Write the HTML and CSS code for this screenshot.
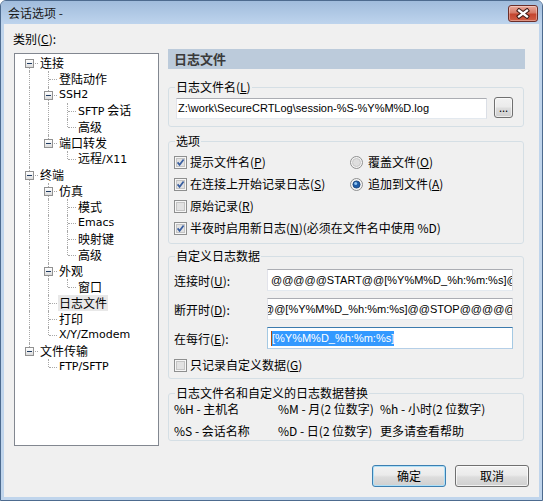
FILE: index.html
```html
<!DOCTYPE html>
<html lang="zh-CN">
<head>
<meta charset="utf-8">
<title>会话选项</title>
<link rel="stylesheet" href="styles.css">
</head>
<body>
<div class="window">
  <div class="titlebar">
    <span class="title">会话选项 -</span>
    <button class="close" aria-label="关闭">
      <svg width="14" height="11" viewBox="0 0 14 11"><path d="M3 2.5 L11 8.5 M11 2.5 L3 8.5" stroke="#3d1a16" stroke-width="4.2" stroke-linecap="square"/><path d="M3 2.5 L11 8.5 M11 2.5 L3 8.5" stroke="#ffffff" stroke-width="2.2" stroke-linecap="square"/></svg>
    </button>
  </div>
  <div class="client">
    <div class="main">
      <div class="left">
        <div class="cat-label">类别(<u>C</u>):</div>
        <div class="tree">
          <div class="row"><span class="c first"><i class="box"></i></span><span class="lbl">连接</span></div>
          <div class="row"><span class="c v"></span><span class="c tee"></span><span class="lbl">登陆动作</span></div>
          <div class="row"><span class="c v"></span><span class="c tee"><i class="box"></i></span><span class="lbl lat">SSH2</span></div>
          <div class="row"><span class="c v"></span><span class="c v"></span><span class="c tee"></span><span class="lbl"><span class="lat">SFTP</span> 会话</span></div>
          <div class="row"><span class="c v"></span><span class="c v"></span><span class="c ell"></span><span class="lbl">高级</span></div>
          <div class="row"><span class="c v"></span><span class="c ell"><i class="box"></i></span><span class="lbl">端口转发</span></div>
          <div class="row"><span class="c v"></span><span class="c"></span><span class="c ell"></span><span class="lbl">远程<span class="lat">/X11</span></span></div>
          <div class="row"><span class="c tee"><i class="box"></i></span><span class="lbl">终端</span></div>
          <div class="row"><span class="c v"></span><span class="c tee"><i class="box"></i></span><span class="lbl">仿真</span></div>
          <div class="row"><span class="c v"></span><span class="c v"></span><span class="c tee"></span><span class="lbl">模式</span></div>
          <div class="row"><span class="c v"></span><span class="c v"></span><span class="c tee"></span><span class="lbl lat">Emacs</span></div>
          <div class="row"><span class="c v"></span><span class="c v"></span><span class="c tee"></span><span class="lbl">映射键</span></div>
          <div class="row"><span class="c v"></span><span class="c v"></span><span class="c ell"></span><span class="lbl">高级</span></div>
          <div class="row"><span class="c v"></span><span class="c tee"><i class="box"></i></span><span class="lbl">外观</span></div>
          <div class="row"><span class="c v"></span><span class="c v"></span><span class="c ell"></span><span class="lbl">窗口</span></div>
          <div class="row"><span class="c v"></span><span class="c tee"></span><span class="lbl sel">日志文件</span></div>
          <div class="row"><span class="c v"></span><span class="c tee"></span><span class="lbl">打印</span></div>
          <div class="row"><span class="c v"></span><span class="c ell"></span><span class="lbl lat">X/Y/Zmodem</span></div>
          <div class="row"><span class="c ell"><i class="box"></i></span><span class="lbl">文件传输</span></div>
          <div class="row"><span class="c"></span><span class="c ell"></span><span class="lbl lat">FTP/SFTP</span></div>
        </div>
      </div>

      <div class="right">
        <div class="page-title">日志文件</div>

        <div class="group g-file">
          <div class="group-title">日志文件名(<u>L</u>)</div>
          <div class="file-row">
            <div class="textbox file">Z:\work\SecureCRTLog\session-%S-%Y%M%D.log</div>
            <button class="browse">...</button>
          </div>
        </div>

        <div class="group g-opt">
          <div class="group-title">选项</div>
          <div class="opt-grid">
            <div class="chk"><svg class="cb" width="13" height="13" viewBox="0 0 13 13"><rect x="0.5" y="0.5" width="12" height="12" fill="#f6f6f6" stroke="#8e8f8f"/><rect x="2.5" y="2.5" width="8" height="8" fill="#e2e2e2" stroke="#c4c4c4"/><path d="M3.6 6.4 L5.6 8.8 L9.6 3.4" fill="none" stroke="#3a5fa0" stroke-width="1.7"/></svg><span>提示文件名(<u>P</u>)</span></div>
            <div class="chk rd"><svg class="cb" width="13" height="13" viewBox="0 0 13 13"><circle cx="6.5" cy="6.5" r="6" fill="#f4f4f4" stroke="#8e8f8f"/><circle cx="6.5" cy="6.5" r="4" fill="#dedede" stroke="#c8c8c8"/></svg><span>覆盖文件(<u>O</u>)</span></div>
            <div class="chk"><svg class="cb" width="13" height="13" viewBox="0 0 13 13"><rect x="0.5" y="0.5" width="12" height="12" fill="#f6f6f6" stroke="#8e8f8f"/><rect x="2.5" y="2.5" width="8" height="8" fill="#e2e2e2" stroke="#c4c4c4"/><path d="M3.6 6.4 L5.6 8.8 L9.6 3.4" fill="none" stroke="#3a5fa0" stroke-width="1.7"/></svg><span>在连接上开始记录日志(<u>S</u>)</span></div>
            <div class="chk rd"><svg class="cb" width="13" height="13" viewBox="0 0 13 13"><circle cx="6.5" cy="6.5" r="6" fill="#f4f4f4" stroke="#8e8f8f"/><circle cx="6.5" cy="6.5" r="3.6" fill="#1d5ca8" stroke="#163f73" stroke-width="0.8"/><circle cx="5.7" cy="5.6" r="1.5" fill="#8fc3f0"/></svg><span>追加到文件(<u>A</u>)</span></div>
            <div class="chk span"><svg class="cb" width="13" height="13" viewBox="0 0 13 13"><rect x="0.5" y="0.5" width="12" height="12" fill="#f6f6f6" stroke="#8e8f8f"/><rect x="2.5" y="2.5" width="8" height="8" fill="#e2e2e2" stroke="#c4c4c4"/></svg><span>原始记录(<u>R</u>)</span></div>
            <div class="chk span"><svg class="cb" width="13" height="13" viewBox="0 0 13 13"><rect x="0.5" y="0.5" width="12" height="12" fill="#f6f6f6" stroke="#8e8f8f"/><rect x="2.5" y="2.5" width="8" height="8" fill="#e2e2e2" stroke="#c4c4c4"/><path d="M3.6 6.4 L5.6 8.8 L9.6 3.4" fill="none" stroke="#3a5fa0" stroke-width="1.7"/></svg><span>半夜时启用新日志(<u>N</u>)(必须在文件名中使用 %D)</span></div>
          </div>
        </div>

        <div class="group g-custom">
          <div class="group-title">自定义日志数据</div>
          <div class="cust-grid">
            <span>连接时(<u>U</u>):</span>
            <div class="textbox">@@@@@START@@[%Y%M%D_%h:%m:%s]@</div>
            <span>断开时(<u>D</u>):</span>
            <div class="textbox"><span class="shift">@@[%Y%M%D_%h:%m:%s]@@STOP@@@@@</span></div>
            <span>在每行(<u>E</u>):</span>
            <div class="textbox focus"><span class="caret"></span><span class="selected">[%Y%M%D_%h:%m:%s]</span></div>
          </div>
          <div class="chk only"><svg class="cb" width="13" height="13" viewBox="0 0 13 13"><rect x="0.5" y="0.5" width="12" height="12" fill="#f6f6f6" stroke="#8e8f8f"/><rect x="2.5" y="2.5" width="8" height="8" fill="#e2e2e2" stroke="#c4c4c4"/></svg><span>只记录自定义数据(<u>G</u>)</span></div>
        </div>

        <div class="group g-sub">
          <div class="group-title">日志文件名和自定义的日志数据替换</div>
          <div class="sub-grid">
            <span>%H - 主机名</span>
            <span>%M - 月(2 位数字)</span>
            <span>%h - 小时(2 位数字)</span>
            <span>%S - 会话名称</span>
            <span>%D - 日(2 位数字)</span>
            <span>更多请查看帮助</span>
          </div>
        </div>
      </div>
    </div>

    <div class="buttons">
      <button class="btn default">确定</button>
      <button class="btn">取消</button>
    </div>
  </div>
</div>
</body>
</html>
```

FILE: styles.css
```css
* { box-sizing: border-box; }

html, body {
  margin: 0;
  padding: 0;
  background: #ffffff;
}

body {
  font-family: "Noto Sans CJK SC", "Liberation Sans", sans-serif;
  font-size: 12px;
  color: #000;
}

u { text-decoration: underline; text-underline-offset: 1px; }

button { font-family: inherit; }

.window {
  width: 543px;
  height: 501px;
  border: 1px solid #4d6b8f;
  border-radius: 6px 6px 0 0;
  background: #c0d5ec;
  display: flex;
  flex-direction: column;
  overflow: hidden;
}

.titlebar {
  height: 23px;
  flex: none;
  display: flex;
  align-items: flex-start;
  justify-content: space-between;
  background: linear-gradient(#a0bcdc, #bed4ed);
  padding: 0 4px 0 7px;
}

.title {
  margin-top: 4px;
  line-height: 16px;
  font-size: 12px;
  color: #1a1a1a;
}

.close {
  margin-top: 4px;
  width: 30px;
  height: 17px;
  padding: 0;
  border: 1px solid #6b2e29;
  border-radius: 3px;
  background: linear-gradient(#e9a99b 0%, #d67a67 45%, #c4452f 55%, #d15e45 100%);
  box-shadow: inset 0 0 0 1px rgba(255, 255, 255, 0.35);
  display: flex;
  align-items: center;
  justify-content: center;
}

.close svg { display: block; }

.client {
  flex: 1;
  margin: 0 3px 3px;
  background: #f0f0f0;
  display: flex;
  flex-direction: column;
  padding: 0 10px;
}

.main {
  display: flex;
  height: 422px;
  flex: none;
}

.left {
  width: 145px;
  flex: none;
}

.cat-label {
  margin-top: 7px;
  margin-left: -1px;
  line-height: 16px;
}

.tree {
  margin-top: 6px;
  height: 393px;
  border: 1px solid #828790;
  background: #fff;
  padding: 1px 0 0 5px;
}

.row {
  display: flex;
  height: 16px;
  align-items: center;
}

.c {
  width: 19px;
  height: 16px;
  flex: none;
  position: relative;
}

.c.v::before,
.c.tee::before,
.c.ell::before,
.c.first::before {
  content: "";
  position: absolute;
  left: 9px;
  top: 0;
  bottom: 0;
  border-left: 1px dotted #a8a8a8;
}

.c.ell::before { bottom: 8px; }
.c.first::before { top: 8px; }

.c.tee::after,
.c.ell::after,
.c.first::after {
  content: "";
  position: absolute;
  left: 10px;
  right: 1px;
  top: 8px;
  border-top: 1px dotted #a8a8a8;
}

.box {
  position: absolute;
  left: 5px;
  top: 4px;
  width: 9px;
  height: 9px;
  border: 1px solid #919191;
  background: linear-gradient(#ffffff, #dcdcdc);
  z-index: 1;
}

.box::after {
  content: "";
  position: absolute;
  left: 1px;
  top: 3px;
  width: 5px;
  height: 1px;
  background: #1f3b61;
}

.lbl {
  padding: 0 1px;
  line-height: 16px;
  white-space: nowrap;
}

.lat {
  font-family: "DejaVu Sans", "Liberation Sans", sans-serif;
  font-size: 11px;
}

.lbl.sel { background: #e8e8e8; }

.right {
  width: 357px;
  flex: none;
  margin-left: 9px;
  margin-top: 25px;
}

.page-title {
  height: 20px;
  line-height: 20px;
  background: #bccbdb;
  font-weight: bold;
  font-size: 13px;
  color: #3a3a3a;
  padding-left: 6px;
}

.group {
  width: 356px;
  border: 1px solid #d5dfe5;
  border-radius: 3px;
  padding: 0 9px 0 5px;
}

.group-title {
  display: table;
  margin-top: -8px;
  margin-left: 1px;
  padding: 0 1px;
  line-height: 14px;
  background: #f0f0f0;
}

.g-file { margin-top: 18px; padding-bottom: 7px; }

.file-row {
  display: flex;
  gap: 7px;
  margin-top: 4px;
  margin-left: 2px;
  margin-right: 1px;
}

.textbox {
  height: 22px;
  border: 1px solid;
  border-color: #abadb3 #dbdfe6 #e3e9ef #e2e3ea;
  background: #fff;
  font-family: "Liberation Sans", "Noto Sans CJK SC", sans-serif;
  font-size: 11px;
  line-height: 20px;
  padding: 0 3px;
  white-space: nowrap;
  overflow: hidden;
  color: #000;
}

.textbox.file {
  flex: 1;
  height: 21px;
  line-height: 19px;
  padding: 0 1px;
}

.shift {
  display: inline-block;
  margin-left: -8px;
}

.textbox.focus {
  border-color: #3d7bad #a4c9e3 #b5cfe7 #a4c9e3;
  display: flex;
  align-items: center;
}

.caret {
  width: 1px;
  height: 15px;
  background: #b04a10;
  flex: none;
}

.selected {
  background: #3399ff;
  color: #fff;
  line-height: 15px;
}

.browse {
  width: 19px;
  height: 21px;
  flex: none;
  padding: 0 0 3px;
  border: 1px solid #707070;
  border-radius: 3px;
  background: linear-gradient(#f2f2f2 0%, #ebebeb 45%, #dddddd 55%, #cfcfcf 100%);
  box-shadow: inset 0 0 0 1px rgba(255, 255, 255, 0.6);
  font-size: 11px;
  line-height: 14px;
  display: flex;
  align-items: flex-end;
  justify-content: center;
  margin-top: -1px;
}

.g-opt { margin-top: 14px; padding-bottom: 4px; }

.opt-grid {
  display: grid;
  grid-template-columns: 176px 1fr;
  grid-auto-rows: 22px;
  margin-top: 3px;
}

.chk {
  display: flex;
  align-items: center;
  gap: 3px;
  white-space: nowrap;
  line-height: 16px;
}

.chk.rd { gap: 5px; }

.chk.span { grid-column: 1 / -1; }

.cb { display: block; flex: none; }

.g-custom { margin-top: 12px; padding-bottom: 2px; }

.cust-grid {
  display: grid;
  grid-template-columns: 93px 246px;
  grid-auto-rows: 22px;
  row-gap: 7px;
  align-items: center;
  margin-top: 6px;
}

.chk.only {
  height: 22px;
  margin-top: 5px;
}

.g-sub { margin-top: 14px; padding-bottom: 1px; }

.sub-grid {
  display: grid;
  grid-template-columns: 104px 102px auto;
  grid-auto-rows: 16px;
  row-gap: 6px;
  line-height: 16px;
  white-space: nowrap;
  margin-top: 1px;
}

.buttons {
  display: flex;
  justify-content: flex-end;
  gap: 9px;
  margin-top: 19px;
}

.btn {
  width: 74px;
  height: 22px;
  padding: 0;
  border: 1px solid #707070;
  border-radius: 3px;
  background: linear-gradient(#f2f2f2 0%, #ebebeb 45%, #dddddd 55%, #cfcfcf 100%);
  box-shadow: inset 0 0 0 1px rgba(255, 255, 255, 0.7);
  font-size: 12px;
  line-height: 18px;
  color: #000;
}

.btn.default {
  border-color: #3c7fb1;
  box-shadow: inset 0 0 0 1px #aee0f8;
}
```
